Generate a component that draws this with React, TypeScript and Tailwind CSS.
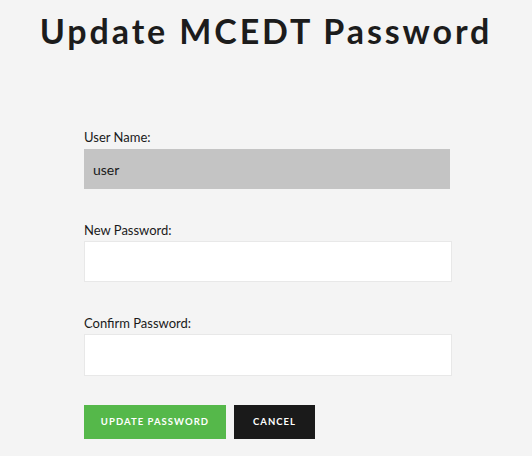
import React from 'react';

export default function App() {
  return (
    <div className="w-[532px] h-[456px] bg-[#f4f4f4] overflow-hidden font-['Lato',sans-serif] text-[#1a1a1a]">
      <h1 className="pt-[8px] text-center text-[34px] leading-[46px] font-bold tracking-[0.085em] text-[#1c1c1c]">
        Update MCEDT Password
      </h1>

      <form className="ml-[84px] mt-[74px] w-[368px] flex flex-col">
        <label className="text-[13px] leading-[18px]">User Name:</label>
        <div className="mt-[3px] h-[40px] w-[366px] bg-[#c4c4c4] flex items-center px-[9px] text-[14px]">
          user
        </div>

        <label className="mt-[32px] text-[13px] leading-[18px]">New Password:</label>
        <input
          type="password"
          className="mt-[2px] h-[41px] w-[368px] bg-white border border-[#e8e8e8] outline-none"
        />

        <label className="mt-[32px] text-[13px] leading-[18px]">Confirm Password:</label>
        <input
          type="password"
          className="mt-[2px] h-[42px] w-[368px] bg-white border border-[#e8e8e8] outline-none"
        />

        <div className="mt-[29px] flex gap-[8px]">
          <button
            type="button"
            className="h-[34px] w-[142px] bg-[#55b84a] text-white text-[9.5px] font-bold tracking-[0.11em] uppercase"
          >
            Update Password
          </button>
          <button
            type="button"
            className="h-[34px] w-[81px] bg-[#1a1a1a] text-white text-[9.5px] font-bold tracking-[0.11em] uppercase"
          >
            Cancel
          </button>
        </div>
      </form>
    </div>
  );
}
